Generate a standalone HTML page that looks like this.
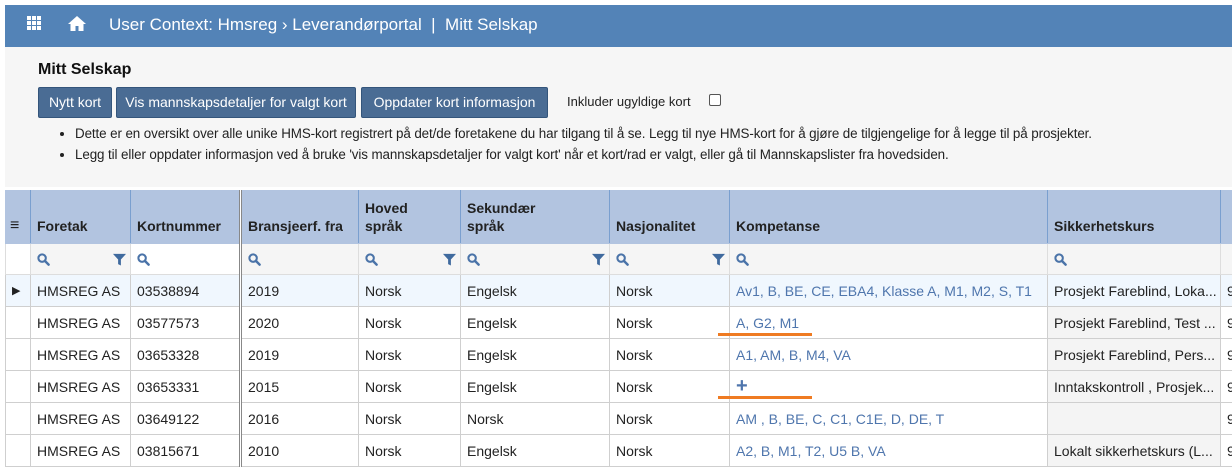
<!DOCTYPE html>
<html><head><meta charset="utf-8"><style>
*{box-sizing:border-box}
body{margin:0;width:1232px;height:471px;overflow:hidden;background:#fff;font-family:"Liberation Sans",sans-serif;color:#222;position:relative}
.top{position:absolute;left:5px;top:5px;width:1227px;height:42px;background:#5383b7;color:#fff;font-size:17px}
.top span{position:absolute;top:10px}
.panel{position:absolute;left:5px;top:47px;width:1227px;height:140px;background:#f6f6f6}
h1{position:absolute;left:33px;top:14px;margin:0;font-size:16px;font-weight:bold;color:#111}
.btn{position:absolute;top:40px;height:31px;background:#4a6c94;border:1px solid #34557b;border-radius:2px;color:#fff;font-size:14px;line-height:29px;text-align:center}
.incl{position:absolute;left:562px;top:47px;font-size:13px}
.cb{position:absolute;left:704px;top:47px;width:12px;height:12px;border:1px solid #555;background:#fff;border-radius:2px}
ul{position:absolute;left:52px;top:76px;margin:0;padding:0 0 0 18px;font-size:13.4px;line-height:21px;letter-spacing:-0.1px}
table{position:absolute;left:5px;top:190px;width:1235px;border-collapse:collapse;font-size:14px;table-layout:fixed}
td,th{border:1px solid #cfcfcf;padding:0 6px;white-space:nowrap;overflow:hidden;text-align:left}
th{background:#b2c4e0;height:53px;vertical-align:bottom;padding-bottom:8px;font-weight:bold;border-color:#b2c4e0;border-right:1px solid #7a9fcf;line-height:18px}
tr.f td{height:31px;background:#f5f5f5;border-color:#ddd;position:relative}
tr.d td{height:32px}
tr.sel td{background:#f0f7fe}
.k{color:#4f76ad}
.g{background:#f4f4f4}
.dbl{border-left:3px double #888!important}
.mag{display:inline-block;vertical-align:middle;position:relative;top:-1px}
.fil{position:absolute;right:4px;top:9px}
.ul{position:absolute;left:718px;width:94px;height:3px;background:#ef7b22}
</style></head><body>
<div class="top">
<span style="left:22px;top:10px">
<svg width="14" height="14" viewBox="0 0 14 14" fill="#fff"><rect x="0" y="0" width="4" height="4"/><rect x="5" y="0" width="4" height="4"/><rect x="10" y="0" width="4" height="4"/><rect x="0" y="5" width="4" height="4"/><rect x="5" y="5" width="4" height="4"/><rect x="10" y="5" width="4" height="4"/><rect x="0" y="10" width="4" height="4"/><rect x="5" y="10" width="4" height="4"/><rect x="10" y="10" width="4" height="4"/></svg></span>
<span style="left:63px;top:10px"><svg width="18" height="16" viewBox="0 0 18 16" fill="#fff"><path d="M9 1L0 9h2.5v7h5v-5h3v5h5V9H18z"/></svg></span>
<span style="left:104px">User Context: Hmsreg &#x203A; Leverandørportal &nbsp;|&nbsp; Mitt Selskap</span>
</div>
<div class="panel">
<h1>Mitt Selskap</h1>
<div class="btn" style="left:33px;width:74px">Nytt kort</div>
<div class="btn" style="left:111px;width:240px">Vis mannskapsdetaljer for valgt kort</div>
<div class="btn" style="left:356px;width:187px">Oppdater kort informasjon</div>
<div class="incl">Inkluder ugyldige kort</div><div class="cb"></div>
<ul><li>Dette er en oversikt over alle unike HMS-kort registrert på det/de foretakene du har tilgang til å se. Legg til nye HMS-kort for å gjøre de tilgjengelige for å legge til på prosjekter.</li>
<li>Legg til eller oppdater informasjon ved å bruke 'vis mannskapsdetaljer for valgt kort' når et kort/rad er valgt, eller gå til Mannskapslister fra hovedsiden.</li></ul>
</div>
<svg width="0" height="0" style="position:absolute"><defs>
<symbol id="m" viewBox="0 0 14 14"><circle cx="5.5" cy="5.5" r="4" fill="none" stroke="#4a73a8" stroke-width="2.2"/><path d="M8.5 8.5L12.5 12.5" stroke="#4a73a8" stroke-width="2.6" stroke-linecap="round"/></symbol>
<symbol id="fl" viewBox="0 0 14 14"><path d="M0 1h14L8.5 7v6.5L5.5 12V7z" fill="#3f6a9e"/></symbol></defs></svg>
<table>
<colgroup><col style="width:25px"><col style="width:100px"><col style="width:110px"><col style="width:118px"><col style="width:102px"><col style="width:149px"><col style="width:120px"><col style="width:318px"><col style="width:173px"><col style="width:20px"></colgroup>
<tr><th style="padding:0 0 8px 4px;font-size:16px">&#8801;</th><th>Foretak</th><th>Kortnummer</th><th class="dbl">Bransjeerf. fra</th><th>Hoved<br>språk</th><th>Sekundær<br>språk</th><th>Nasjonalitet</th><th>Kompetanse</th><th>Sikkerhetskurs</th><th></th></tr>
<tr class="f"><td style="background:#fff"></td>
<td><svg class="mag" width="13" height="13"><use href="#m"/></svg><svg class="fil" width="13" height="13"><use href="#fl"/></svg></td>
<td style="background:#fff"><svg class="mag" width="13" height="13"><use href="#m"/></svg></td>
<td class="dbl"><svg class="mag" width="13" height="13"><use href="#m"/></svg></td>
<td><svg class="mag" width="13" height="13"><use href="#m"/></svg><svg class="fil" width="13" height="13"><use href="#fl"/></svg></td>
<td><svg class="mag" width="13" height="13"><use href="#m"/></svg><svg class="fil" width="13" height="13"><use href="#fl"/></svg></td>
<td><svg class="mag" width="13" height="13"><use href="#m"/></svg><svg class="fil" width="13" height="13"><use href="#fl"/></svg></td>
<td><svg class="mag" width="13" height="13"><use href="#m"/></svg></td>
<td><svg class="mag" width="13" height="13"><use href="#m"/></svg></td><td></td></tr>
<tr class="d sel"><td style="padding:0 0 0 6px;font-size:11px">&#9654;</td><td>HMSREG AS</td><td>03538894</td><td class="dbl">2019</td><td>Norsk</td><td>Engelsk</td><td>Norsk</td><td class="k">Av1, B, BE, CE, EBA4, Klasse A, M1, M2, S, T1</td><td>Prosjekt Fareblind, Loka...</td><td>9</td></tr>
<tr class="d"><td></td><td>HMSREG AS</td><td>03577573</td><td class="dbl">2020</td><td>Norsk</td><td>Engelsk</td><td>Norsk</td><td class="k">A, G2, M1</td><td class="g">Prosjekt Fareblind, Test ...</td><td>9</td></tr>
<tr class="d"><td></td><td>HMSREG AS</td><td>03653328</td><td class="dbl">2019</td><td>Norsk</td><td>Engelsk</td><td>Norsk</td><td class="k">A1, AM, B, M4, VA</td><td class="g">Prosjekt Fareblind, Pers...</td><td>9</td></tr>
<tr class="d"><td></td><td>HMSREG AS</td><td>03653331</td><td class="dbl">2015</td><td>Norsk</td><td>Engelsk</td><td>Norsk</td><td class="k" style="font-size:20px;font-weight:bold">+</td><td class="g">Inntakskontroll , Prosjek...</td><td>9</td></tr>
<tr class="d"><td></td><td>HMSREG AS</td><td>03649122</td><td class="dbl">2016</td><td>Norsk</td><td>Norsk</td><td>Norsk</td><td class="k">AM , B, BE, C, C1, C1E, D, DE, T</td><td class="g"></td><td>9</td></tr>
<tr class="d"><td></td><td>HMSREG AS</td><td>03815671</td><td class="dbl">2010</td><td>Norsk</td><td>Engelsk</td><td>Norsk</td><td class="k">A2, B, M1, T2, U5 B, VA</td><td class="g">Lokalt sikkerhetskurs (L...</td><td>9</td></tr>
</table>
<div class="ul" style="top:333px"></div>
<div class="ul" style="top:396px"></div>
</body></html>
